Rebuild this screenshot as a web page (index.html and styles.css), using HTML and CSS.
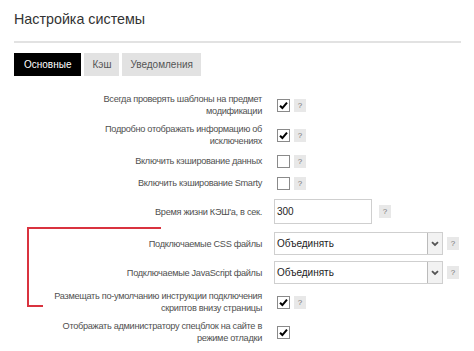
FILE: index.html
```html
<!DOCTYPE html>
<html lang="ru">
<head>
<meta charset="UTF-8" />
<title>Настройка системы</title>
<link rel="stylesheet" href="styles.css">
</head>
<body>
  <div class="page">
    <h1>Настройка системы</h1>

    <!-- Вкладки -->
    <div class="tabs">
      <span class="tab active">Основные</span>
      <span class="tab">Кэш</span>
      <span class="tab">Уведомления</span>
    </div>

    <div class="form">
      <div class="row">
        <div class="label">Всегда проверять шаблоны на предмет<br>модификации</div>
        <div class="ctrl"><span class="cb"><svg viewBox="0 0 12 12"><path d="M2.2 6.2 L4.8 8.8 L9.8 2.8" /></svg></span><span class="help">?</span></div>
      </div>
      <div class="row">
        <div class="label">Подробно отображать информацию об<br>исключениях</div>
        <div class="ctrl"><span class="cb"><svg viewBox="0 0 12 12"><path d="M2.2 6.2 L4.8 8.8 L9.8 2.8" /></svg></span><span class="help">?</span></div>
      </div>
      <div class="row">
        <div class="label">Включить кэширование данных</div>
        <div class="ctrl"><span class="cb"></span><span class="help">?</span></div>
      </div>
      <div class="row">
        <div class="label">Включить кэширование Smarty</div>
        <div class="ctrl"><span class="cb"></span><span class="help">?</span></div>
      </div>
      <div class="row row-input">
        <div class="label">Время жизни КЭШ'а, в сек.</div>
        <div class="ctrl"><span class="field">300</span><span class="help">?</span></div>
      </div>
      <div class="row row-select">
        <div class="label">Подключаемые CSS файлы</div>
        <div class="ctrl">
          <span class="select"><span class="select-text">Объединять</span><span class="select-btn"><svg viewBox="0 0 10 10"><path d="M2.5 3.8 L5 6.2 L7.5 3.8" /></svg></span></span>
          <span class="help">?</span>
        </div>
      </div>
      <div class="row row-select">
        <div class="label">Подключаемые JavaScript файлы</div>
        <div class="ctrl">
          <span class="select"><span class="select-text">Объединять</span><span class="select-btn"><svg viewBox="0 0 10 10"><path d="M2.5 3.8 L5 6.2 L7.5 3.8" /></svg></span></span>
          <span class="help">?</span>
        </div>
      </div>
      <div class="row">
        <div class="label">Размещать по-умолчанию инструкции подключения<br>скриптов внизу страницы</div>
        <div class="ctrl"><span class="cb"><svg viewBox="0 0 12 12"><path d="M2.2 6.2 L4.8 8.8 L9.8 2.8" /></svg></span><span class="help">?</span></div>
      </div>
      <div class="row">
        <div class="label">Отображать администратору спецблок на сайте в<br>режиме отладки</div>
        <div class="ctrl"><span class="cb"><svg viewBox="0 0 12 12"><path d="M2.2 6.2 L4.8 8.8 L9.8 2.8" /></svg></span></div>
      </div>

      <!-- красная скобка-пометка -->
      <div class="bracket"></div>
    </div>
  </div>
</body>
</html>
```

FILE: styles.css
```css
body, html {
  margin: 0;
  padding: 0;
  background: #fff;
  font-family: "Liberation Sans", Arial, sans-serif;
  color: #444;
}
.page {
  margin: 0 13px 0 14px;
}
h1 {
  margin: 0;
  padding-top: 8px;
  height: 25px;
  line-height: 23px;
  font-size: 14.3px;
  font-weight: normal;
  color: #333;
  border-bottom: 2px solid #e2e2e2;
  padding-bottom: 8px;
}
/* Вкладки */
.tabs {
  display: flex;
  gap: 3px;
  margin-top: 10px;
}
.tab {
  display: block;
  height: 23px;
  line-height: 23px;
  padding: 0 8px;
  font-size: 10px;
  background: #e2e2e2;
  color: #555;
}
.tab.active {
  background: #000;
  color: #fff;
  padding: 0 10px;
}
/* Форма */
.form {
  position: relative;
  margin-top: 14px;
}
.row {
  display: grid;
  grid-template-columns: 248px 1fr;
  column-gap: 12px;
  align-items: center;
  padding: 3px 0;
  min-height: 16px;
}
.row-input {
  padding: 5px 0;
}
.row-select {
  padding: 3px 0;
}
.label {
  text-align: right;
  font-size: 9.2px;
  line-height: 12px;
  letter-spacing: -0.3px;
  color: #505050;
}
.ctrl {
  display: flex;
  align-items: center;
  gap: 4px;
}
.cb {
  display: block;
  width: 11px;
  height: 11px;
  margin-left: 3px;
  border: 1px solid #8a8a8a;
  background: #fff;
}
.cb svg {
  display: block;
  width: 11px;
  height: 11px;
}
.cb path {
  fill: none;
  stroke: #000;
  stroke-width: 2.2;
}
.help {
  display: block;
  width: 12px;
  height: 13px;
  line-height: 13px;
  text-align: center;
  font-size: 8px;
  background: #e8e8e8;
  color: #777;
}
.field {
  display: block;
  box-sizing: border-box;
  width: 98px;
  height: 25px;
  line-height: 23px;
  padding: 0 2px;
  border: 1px solid #cfcfcf;
  font-size: 10px;
  color: #222;
}
.row-input .help {
  margin-left: 3px;
}
.select {
  display: flex;
  box-sizing: border-box;
  width: 169px;
  height: 23px;
  border: 1px solid #cfcfcf;
}
.select-text {
  flex: 1;
  line-height: 21px;
  padding-left: 2px;
  font-size: 10px;
  color: #222;
}
.select-btn {
  display: block;
  width: 14px;
  border-left: 1px solid #bbb;
  background: #f2f2f2;
}
.select-btn svg {
  display: block;
  width: 12px;
  height: 21px;
  margin: 0 1px;
}
.select-btn path {
  fill: none;
  stroke: #555;
  stroke-width: 1.5;
}
/* Пометка */
.bracket {
  position: absolute;
  left: 13px;
  top: 137px;
  width: 132px;
  height: 78px;
  border-top: 2px solid #d9333f;
  border-left: 2px solid #d9333f;
}
.bracket::after {
  content: "";
  position: absolute;
  left: -2px;
  bottom: 0;
  width: 16px;
  border-bottom: 2px solid #d9333f;
}
```
